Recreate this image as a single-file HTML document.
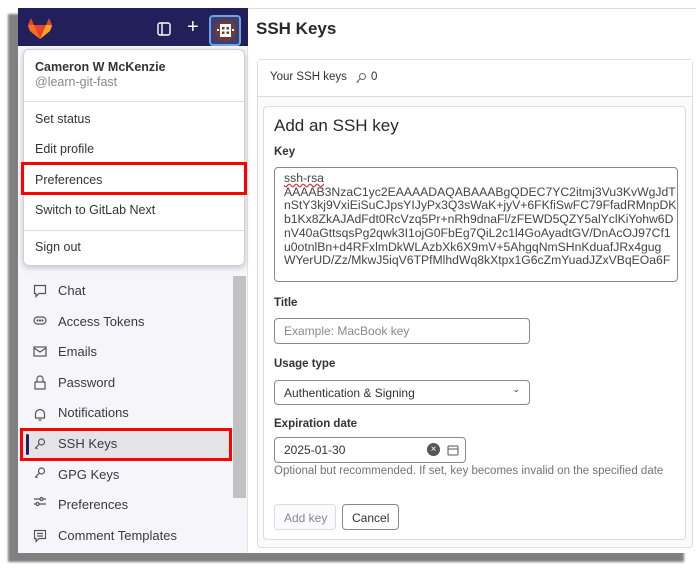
<!DOCTYPE html>
<html><head><style>
*{box-sizing:border-box;margin:0;padding:0}
body{width:696px;height:571px;background:#fff;position:relative;overflow:hidden;font-family:"Liberation Sans",sans-serif;color:#333238}
.a{position:absolute}
.nav{font-size:13px;color:#3a383f}
.nav div{position:absolute;left:58px}
.lbl{font-size:11.5px;font-weight:bold;color:#333238}
.inp{position:absolute;border:1px solid #89888d;border-radius:4px;background:#fff;font-size:12px;white-space:nowrap}
.dd div.t{position:absolute;left:11px;font-size:12.5px;color:#333238}
</style></head><body>
<div class="a" style="left:8px;top:14px;width:676px;height:548px;background:#808080;filter:blur(1px)"></div>
<div class="a" style="left:18px;top:8px;width:678px;height:545px;background:#fff;border-top:1px solid #ddd"></div>
<div class="a" style="left:18px;top:8px;width:230px;height:545px;background:#f6f6fa;border-right:1px solid #e4e4e8"></div>
<div class="a" style="left:18px;top:8px;width:230px;height:38px;background:#22205a"></div>
<div class="a" style="left:233px;top:276px;width:13px;height:222px;background:#c1c1c1"></div>
<svg class="a" style="left:28px;top:18px" width="24" height="22" viewBox="0 0 24 22"><path d="M12 21L2 13 0 7 3 0 6 7h12l3-7 3 7-2 6z" fill="#e24329"/><path d="M12 21L6 7H1l-1 1 2 5z" fill="#fc6d26"/><path d="M12 21l6-14h5l1 1-2 5z" fill="#fca326"/></svg>
<svg class="a" style="left:157px;top:22px" width="14" height="14" viewBox="0 0 14 14"><rect x="1" y="1" width="12" height="12" rx="2" fill="none" stroke="#fff" stroke-width="1.4"/><line x1="5" y1="1" x2="5" y2="13" stroke="#fff" stroke-width="1.4"/></svg>
<div class="a" style="left:187px;top:16px;color:#fff;font-size:20px;line-height:22px">+</div>
<div class="a" style="left:209px;top:15px;width:32px;height:31px;border:2px solid #6ca2e8;border-radius:4px;background:#3e3d6e"></div>
<svg class="a" style="left:214px;top:19px" width="23" height="23" viewBox="0 0 23 23"><circle cx="11.5" cy="11.5" r="11" fill="#6b3c3a"/><rect x="6" y="5" width="11" height="13" fill="#fff"/><rect x="8" y="8" width="2.5" height="2.5" fill="#6b3c3a"/><rect x="12.5" y="8" width="2.5" height="2.5" fill="#6b3c3a"/><rect x="8" y="12.5" width="2.5" height="2.5" fill="#6b3c3a"/><rect x="12.5" y="12.5" width="2.5" height="2.5" fill="#6b3c3a"/><rect x="3" y="10" width="2" height="2" fill="#fff"/><rect x="18" y="10" width="2" height="2" fill="#fff"/></svg>
<div class="a" style="left:256px;top:19px;font-size:17px;font-weight:bold;color:#28272d">SSH Keys</div>
<div class="a" style="left:257px;top:59px;width:436px;height:489px;border:1px solid #dcdcde;border-radius:4px;background:#fbfafd"></div>
<div class="a" style="left:258px;top:60px;width:434px;height:37px;background:#fff;border-bottom:1px solid #dcdcde"></div>
<div class="a" style="left:270px;top:71px;font-size:11.5px;color:#333238">Your SSH keys</div>
<svg class="a" style="left:355px;top:72px" width="12" height="12" viewBox="0 0 12 12"><circle cx="7.5" cy="4.5" r="3" fill="none" stroke="#666" stroke-width="1"/><path d="M5.5 6.5L1.5 10.5M2.5 9.5l1 1" stroke="#666" stroke-width="1"/></svg>
<div class="a" style="left:371px;top:71px;font-size:11.5px">0</div>
<div class="a" style="left:263px;top:106px;width:423px;height:434px;border:1px solid #dcdcde;border-radius:4px;background:#fff"></div>
<div class="a" style="left:274px;top:116px;font-size:17px;color:#28272d">Add an SSH key</div>
<div class="a lbl" style="left:274px;top:146px">Key</div>
<div class="inp" style="left:274px;top:167px;width:404px;height:115px;overflow:hidden;padding:4px 0 0 9px;font-size:12.2px;line-height:13.7px;color:#444">
<span style="text-decoration:underline wavy #d33">ssh-rsa</span><br>AAAAB3NzaC1yc2EAAAADAQABAAABgQDEC7YC2itmj3Vu3KvWgJdT<br>nStY3kj9VxiEiSuCJpsYIJyPx3Q3sWaK+jyV+6FKfiSwFC79FfadRMnpDKc<br>b1Kx8ZkAJAdFdt0RcVzq5Pr+nRh9dnaFl/zFEWD5QZY5alYclKiYohw6D<br>nV40aGttsqsPg2qwk3I1ojG0FbEg7QiL2c1l4GoAyadtGV/DnAcOJ97Cf1<br>u0otnlBn+d4RFxlmDkWLAzbXk6X9mV+5AhgqNmSHnKduafJRx4gug<br>WYerUD/Zz/MkwJ5iqV6TPfMlhdWq8kXtpx1G6cZmYuadJZxVBqEOa6F</div>
<div class="a lbl" style="left:274px;top:297px">Title</div>
<div class="inp" style="left:274px;top:318px;width:256px;height:26px;padding:5px 9px;color:#89888d">Example: MacBook key</div>
<div class="a lbl" style="left:274px;top:358px">Usage type</div>
<div class="inp" style="left:274px;top:380px;width:256px;height:25px;padding:5px 9px;color:#333">Authentication &amp; Signing<span style="position:absolute;right:9px;top:3px;font-size:9px">&#8964;</span></div>
<div class="a lbl" style="left:274px;top:418px">Expiration date</div>
<div class="inp" style="left:274px;top:437px;width:192px;height:26px;padding:5px 9px;color:#333">2025-01-30
<span style="position:absolute;left:152px;top:5px;width:13px;height:13px;border-radius:50%;background:#555;color:#fff;font-size:10px;line-height:13px;text-align:center">×</span>
<svg style="position:absolute;left:172px;top:6px" width="12" height="12" viewBox="0 0 12 12"><rect x="1" y="2" width="10" height="9" rx="1" fill="none" stroke="#555"/><line x1="1" y1="5" x2="11" y2="5" stroke="#555"/></svg></div>
<div class="a" style="left:274px;top:465px;font-size:11.5px;color:#737278;white-space:nowrap;width:405px;overflow:hidden">Optional but recommended. If set, key becomes invalid on the specified date</div>
<div class="a" style="left:274px;top:504px;width:62px;height:26px;border:1px solid #dcdcde;border-radius:4px;background:#fbfafd;color:#89888d;font-size:12px;padding:6px 9px;white-space:nowrap">Add key</div>
<div class="a" style="left:342px;top:504px;width:57px;height:26px;border:1px solid #89888d;border-radius:4px;color:#333;font-size:12px;padding:6px 9px;white-space:nowrap">Cancel</div>
<div class="nav">
<div style="top:283px">Chat</div>
<div style="top:314px">Access Tokens</div>
<div style="top:344px">Emails</div>
<div style="top:375px">Password</div>
<div style="top:405px">Notifications</div>
<div style="top:467px">GPG Keys</div>
<div style="top:497px">Preferences</div>
<div style="top:528px">Comment Templates</div>
</div>
<div class="a" style="left:22px;top:430px;width:208px;height:29px;background:#e4e4e8"></div>
<div class="a" style="left:20px;top:428px;width:212px;height:33px;border:3px solid #f00"></div>
<div class="a" style="left:26px;top:434px;width:3px;height:21px;background:#22205a;border-radius:2px"></div>
<div class="a nav" style="left:58px;top:436px">SSH Keys</div>
<svg class="a" style="left:33px;top:284px" width="14" height="230" viewBox="0 0 14 230" fill="none" stroke="#555" stroke-width="1.2">
<path d="M1.5 1.5h11v8H6l-3 3v-3H1.5z"/>
<rect x="1" y="33" width="12" height="7" rx="3.5"/><circle cx="4.5" cy="36.5" r=".5"/><circle cx="7" cy="36.5" r=".5"/><circle cx="9.5" cy="36.5" r=".5"/>
<rect x="1" y="63" width="12" height="9"/><path d="M1 64l6 4 6-4"/>
<rect x="2" y="98" width="10" height="7"/><path d="M4 98v-3a3 3 0 0 1 6 0v3"/>
<path d="M2.5 134v-4a4.5 4.5 0 0 1 9 0v4zM5.5 136h3"/>
<circle cx="8.5" cy="187" r="3"/><path d="M6.5 189L2 193.5M3 192.5l1.5 1.5"/>
<path d="M1 215h6M10 215h3M1 220h2M6 220h7"/><circle cx="8.5" cy="215" r="1.5"/><circle cx="4.5" cy="220" r="1.5"/>
</svg>
<svg class="a" style="left:33px;top:437px" width="14" height="14" viewBox="0 0 14 14" fill="none" stroke="#555" stroke-width="1.2"><circle cx="8.5" cy="5" r="3"/><path d="M6.5 7L2 11.5M3 10.5l1.5 1.5"/></svg>
<svg class="a" style="left:33px;top:529px" width="14" height="14" viewBox="0 0 14 14" fill="none" stroke="#555" stroke-width="1.2"><path d="M1.5 1.5h11v8H6l-3 3v-3H1.5z"/><path d="M4 4.5h6M4 7h6"/></svg>
<div class="a dd" style="left:23px;top:49px;width:222px;height:217px;background:#fff;border:1px solid #d0d0d4;border-radius:6px;box-shadow:0 2px 6px rgba(0,0,0,.2)">
<div class="t" style="top:10px;font-weight:bold;font-size:12.5px">Cameron W McKenzie</div>
<div class="t" style="top:25px;color:#89888d">@learn-git-fast</div>
<div style="position:absolute;left:0;right:0;top:51px;border-top:1px solid #dcdcde"></div>
<div class="t" style="top:62px">Set status</div>
<div class="t" style="top:92px">Edit profile</div>
<div class="t" style="top:123px">Preferences</div>
<div class="t" style="top:153px">Switch to GitLab Next</div>
<div style="position:absolute;left:0;right:0;top:180px;border-top:1px solid #dcdcde"></div>
<div class="t" style="top:190px">Sign out</div>
</div>
<div class="a" style="left:21px;top:162px;width:226px;height:33px;border:3px solid #f00"></div>
</body></html>
